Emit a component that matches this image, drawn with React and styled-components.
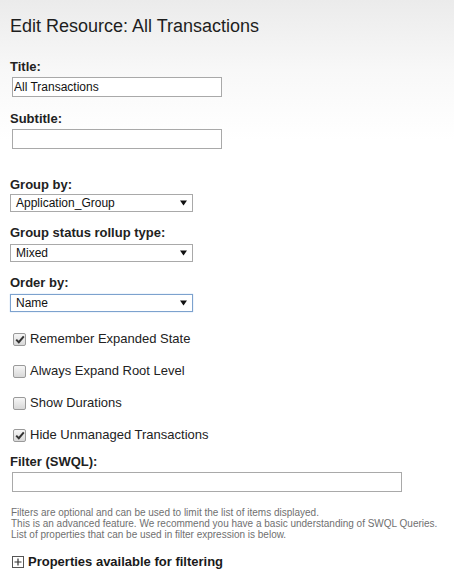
import React from "react";
import styled, { createGlobalStyle } from "styled-components";

const GlobalStyle = createGlobalStyle`
  html, body {
    margin: 0;
    padding: 0;
    background: #fff;
  }
  body {
    font-family: "Liberation Sans", Arial, sans-serif;
    color: #222;
  }
`;

const Page = styled.div`
  min-height: 586px;
  box-sizing: border-box;
  padding: 15px 0 0 10px;
  background: linear-gradient(to bottom, #ebebeb 0, #f8f8f8 70px, #fff 140px);
`;

const Heading = styled.h1`
  margin: 0;
  font-size: 18px;
  font-weight: normal;
  line-height: 22px;
  color: #1e1e1e;
`;

const Field = styled.div`
  margin-top: ${(p) => p.$top}px;
`;

const Label = styled.div`
  font-size: 13px;
  font-weight: bold;
  line-height: 16px;
  margin-bottom: ${(p) => p.$gap ?? 2}px;
`;

const TextInput = styled.input`
  display: block;
  box-sizing: border-box;
  margin-left: 2px;
  width: ${(p) => p.$width}px;
  height: 20px;
  padding: 0 1px;
  border: 1px solid #a9a9a9;
  background: #fff;
  font-family: "Liberation Sans", Arial, sans-serif;
  font-size: 12px;
  color: #111;
  outline: none;
`;

const SelectBox = styled.div`
  box-sizing: border-box;
  width: 183px;
  height: 18px;
  display: flex;
  align-items: center;
  justify-content: space-between;
  padding: 0 5px;
  background: #fff;
  border: 1px solid ${(p) => (p.$focused ? "#7da2ce" : "#a9a9a9")};
  box-shadow: ${(p) => (p.$focused ? "0 0 1px #9fc3ea" : "none")};
  font-size: 12px;
  color: #111;
`;

const CheckRow = styled.label`
  display: flex;
  align-items: center;
  gap: 4px;
  margin-top: ${(p) => p.$top}px;
  padding-left: 3px;
  height: 16px;
  font-size: 13px;
  line-height: 16px;
`;

const Box = styled.span`
  box-sizing: border-box;
  width: 13px;
  height: 13px;
  display: flex;
  align-items: center;
  justify-content: center;
  border: 1px solid #9a9a9a;
  border-radius: 2px;
  background: linear-gradient(to bottom, #f6f6f6, #d8d8d8);
`;

const Help = styled.div`
  margin-top: 15px;
  margin-left: 1px;
  font-size: 10px;
  line-height: 11px;
  color: #707070;
`;

const Expander = styled.div`
  display: flex;
  align-items: center;
  gap: 4px;
  margin-top: 14px;
  padding-left: 2px;
  font-size: 13px;
  font-weight: bold;
  line-height: 16px;
  color: #1a1a1a;
`;

const PlusBox = styled.span`
  box-sizing: border-box;
  width: 12px;
  height: 12px;
  display: flex;
  align-items: center;
  justify-content: center;
  border: 1px solid #555;
  background: #fff;
`;

const Arrow = () => (
  <svg width="7" height="6" viewBox="0 0 7 6">
    <path d="M0 0.5 H7 L3.5 5.5 Z" fill="#111" />
  </svg>
);

const Select = ({ value, focused }) => (
  <SelectBox $focused={focused}>
    <span>{value}</span>
    <Arrow />
  </SelectBox>
);

const Check = ({ checked, top, children }) => (
  <CheckRow $top={top}>
    <Box>
      {checked && (
        <svg width="10" height="9" viewBox="0 0 10 9">
          <path d="M1.2 4.6 L3.8 7.2 L8.8 1.4" fill="none" stroke="#333" strokeWidth="2" />
        </svg>
      )}
    </Box>
    {children}
  </CheckRow>
);

export default function App() {
  return (
    <>
      <GlobalStyle />
      <Page>
        <Heading>Edit Resource: All Transactions</Heading>

        <Field $top={22}>
          <Label>Title:</Label>
          <TextInput $width={210} defaultValue="All Transactions" />
        </Field>

        <Field $top={14}>
          <Label>Subtitle:</Label>
          <TextInput $width={210} defaultValue="" />
        </Field>

        <Field $top={28}>
          <Label $gap={1}>Group by:</Label>
          <Select value="Application_Group" />
        </Field>

        <Field $top={13}>
          <Label $gap={3}>Group status rollup type:</Label>
          <Select value="Mixed" />
        </Field>

        <Field $top={13}>
          <Label $gap={3}>Order by:</Label>
          <Select value="Name" focused />
        </Field>

        <Check checked top={19}>Remember Expanded State</Check>
        <Check top={16}>Always Expand Root Level</Check>
        <Check top={16}>Show Durations</Check>
        <Check checked top={16}>Hide Unmanaged Transactions</Check>

        <Field $top={11}>
          <Label>Filter (SWQL):</Label>
          <TextInput $width={390} defaultValue="" />
        </Field>

        <Help>
          Filters are optional and can be used to limit the list of items displayed.
          <br />
          This is an advanced feature. We recommend you have a basic understanding of SWQL Queries.
          <br />
          List of properties that can be used in filter expression is below.
        </Help>

        <Expander>
          <PlusBox>
            <svg width="8" height="8" viewBox="0 0 8 8">
              <path d="M4 0.5 V7.5 M0.5 4 H7.5" stroke="#333" strokeWidth="1.2" />
            </svg>
          </PlusBox>
          Properties available for filtering
        </Expander>
      </Page>
    </>
  );
}
